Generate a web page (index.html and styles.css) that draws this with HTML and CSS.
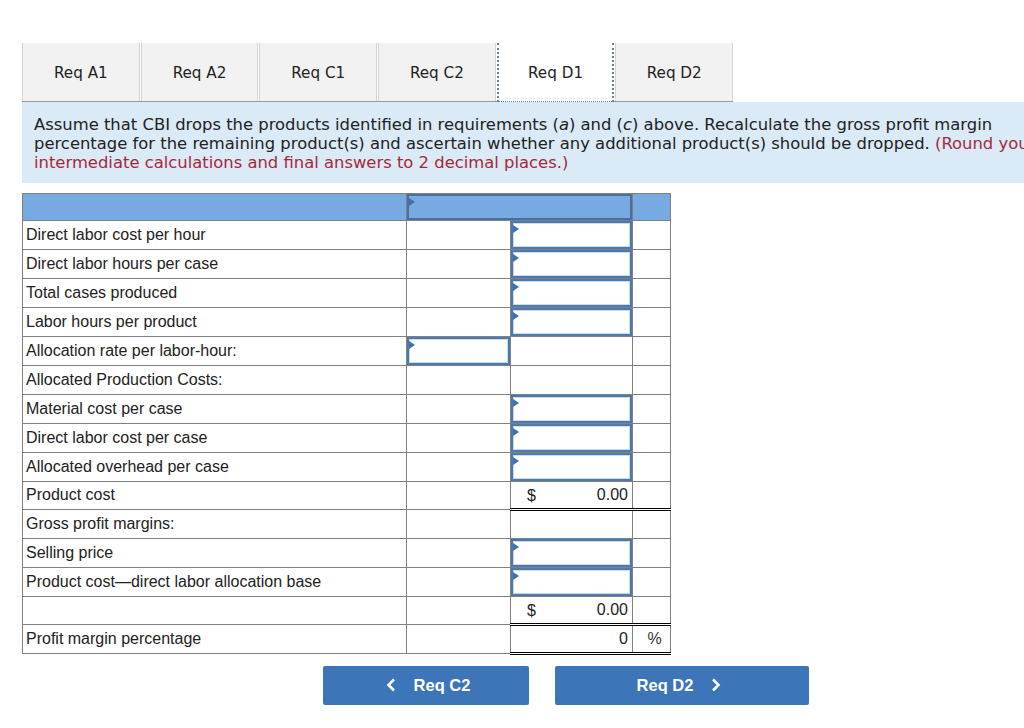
FILE: index.html
```html
<!DOCTYPE html>
<html>
<head>
<meta charset="utf-8">
<link rel="stylesheet" href="styles.css">
</head>
<body>
<div class="page">
  <div class="tabs">
    <div class="tab">Req A1</div>
    <div class="tab">Req A2</div>
    <div class="tab">Req C1</div>
    <div class="tab">Req C2</div>
    <div class="tab active">Req D1</div>
    <div class="tab">Req D2</div>
  </div>
  <div class="instr">
    <div class="line">Assume that CBI drops the products identified in requirements (<i>a</i>) and (<i>c</i>) above. Recalculate the gross profit margin</div>
    <div class="line">percentage for the remaining product(s) and ascertain whether any additional product(s) should be dropped. <span class="red">(Round your</span></div>
    <div class="line red">intermediate calculations and final answers to 2 decimal places.)</div>
  </div>
  <table class="grid">
    <colgroup><col class="c1"><col class="c2"><col class="c3"><col class="c4"></colgroup>
    <tr class="head"><td></td><td colspan="2" class="ic"><div class="inp hinp"><span class="tri"></span></div></td><td></td></tr>
    <tr><td class="lbl">Direct labor cost per hour</td><td></td><td class="ic"><div class="inp"><span class="tri"></span></div></td><td></td></tr>
    <tr><td class="lbl">Direct labor hours per case</td><td></td><td class="ic"><div class="inp"><span class="tri"></span></div></td><td></td></tr>
    <tr><td class="lbl">Total cases produced</td><td></td><td class="ic"><div class="inp"><span class="tri"></span></div></td><td></td></tr>
    <tr><td class="lbl">Labor hours per product</td><td></td><td class="ic"><div class="inp"><span class="tri"></span></div></td><td></td></tr>
    <tr><td class="lbl">Allocation rate per labor-hour:</td><td class="ic"><div class="inp"><span class="tri"></span></div></td><td></td><td></td></tr>
    <tr><td class="lbl">Allocated Production Costs:</td><td></td><td></td><td></td></tr>
    <tr><td class="lbl">Material cost per case</td><td></td><td class="ic"><div class="inp"><span class="tri"></span></div></td><td></td></tr>
    <tr><td class="lbl">Direct labor cost per case</td><td></td><td class="ic"><div class="inp"><span class="tri"></span></div></td><td></td></tr>
    <tr><td class="lbl">Allocated overhead per case</td><td></td><td class="ic"><div class="inp"><span class="tri"></span></div></td><td></td></tr>
    <tr class="tot"><td class="lbl">Product cost</td><td></td><td class="num"><span class="cur">$</span><span class="val">0.00</span></td><td class="t4"></td></tr>
    <tr><td class="lbl">Gross profit margins:</td><td></td><td></td><td></td></tr>
    <tr><td class="lbl">Selling price</td><td></td><td class="ic"><div class="inp"><span class="tri"></span></div></td><td></td></tr>
    <tr><td class="lbl">Product cost—direct labor allocation base</td><td></td><td class="ic"><div class="inp"><span class="tri"></span></div></td><td></td></tr>
    <tr class="tot"><td class="lbl"></td><td></td><td class="num"><span class="cur">$</span><span class="val">0.00</span></td><td class="t4"></td></tr>
    <tr class="last"><td class="lbl">Profit margin percentage</td><td></td><td class="num"><span class="val">0</span></td><td class="pct">%</td></tr>
  </table>
  <div class="nav">
    <button class="btn prev"><svg width="10" height="14" viewBox="0 0 10 14"><polyline points="8,1.5 2.5,7 8,12.5" fill="none" stroke="#fff" stroke-width="2.6"/></svg><span>Req C2</span></button>
    <button class="btn next"><span>Req D2</span><svg width="10" height="14" viewBox="0 0 10 14"><polyline points="2,1.5 7.5,7 2,12.5" fill="none" stroke="#fff" stroke-width="2.6"/></svg></button>
  </div>
</div>
</body>
</html>
```
FILE: styles.css
```css
html, body { margin: 0; padding: 0; overflow: hidden; background: #fff; }
.page { padding: 43px 0 0 22px; width: 1100px; }

.tabs { display: flex; gap: 1px; height: 58px; width: 711px; border-bottom: 1px solid #9a9a9a; }
.tab {
  width: 118px; box-sizing: border-box; height: 58px;
  background: #f2f2f2; border-left: 1px solid #d4d4d4; border-right: 1px solid #d4d4d4;
  font-family: "DejaVu Sans", Verdana, sans-serif; font-size: 15.2px; color: #222;
  display: flex; align-items: center; justify-content: center; padding-top: 1px;
}
.tab.active { background: #fff; border-left: 2px dotted #6a7f95; border-right: 2px dotted #6a7f95; border-bottom: 1px dotted #6a7f95; height: 59px; margin-bottom: -1px; }

.instr {
  background: #daeaf7; width: 1040px; height: 81px; box-sizing: border-box;
  padding: 13px 0 0 12px;
  font-family: "DejaVu Sans", Verdana, sans-serif; font-size: 16.4px; line-height: 19px; color: #222;
}
.instr .line { white-space: nowrap; }
.red { color: #a8283a; }

.grid { border-collapse: collapse; margin-top: 10px; table-layout: fixed; width: 648px;
  font-family: "Liberation Sans", Arial, sans-serif; font-size: 16px; color: #222; }
.c1 { width: 384px; } .c2 { width: 104px; } .c3 { width: 122px; } .c4 { width: 38px; }
.grid td { border: 1px solid #808080; height: 28.5px; padding: 0; box-sizing: border-box; }
.grid tr.head td { background: #76aae0; height: 25px; }
.lbl { padding-left: 3px !important; white-space: nowrap; }
.ic { position: relative; }
.inp { position: relative; box-sizing: border-box; height: 28px; border: 2px solid #4d79ae; box-shadow: inset 0 0 0 1px #c7dbef; background: #fff; }
.hinp { background: #76aae0; box-shadow: none; border-color: #4a6f9e; height: 26px; }
.tri { position: absolute; left: 0; top: 2px; width: 0; height: 0; border-top: 4px solid transparent; border-bottom: 4px solid transparent; border-left: 6px solid #3e6fae; }
.num { position: relative; text-align: right; padding-right: 4px !important; }
.cur { position: absolute; left: 16px; top: 5px; }
.tot td.num, .tot td.t4 { border-top: 1px solid #000; border-bottom: 3px double #000; }
.last td.num, .last td.pct { border-bottom: 3px double #000; }
.pct { text-align: center; padding-left: 6px !important; color: #333; }

.nav { display: flex; gap: 26px; margin: 11px 0 0 301px; }
.btn {
  height: 39px; border: none; border-radius: 2px; background: #3d75b9; color: #fff;
  font-family: "Liberation Sans", Arial, sans-serif; font-weight: bold; font-size: 16.5px;
  display: flex; align-items: center; justify-content: center; gap: 18px; padding: 0;
}
.btn.prev { width: 206px; padding-left: 4px; }
.btn.next { width: 254px; padding-right: 6px; }
```
